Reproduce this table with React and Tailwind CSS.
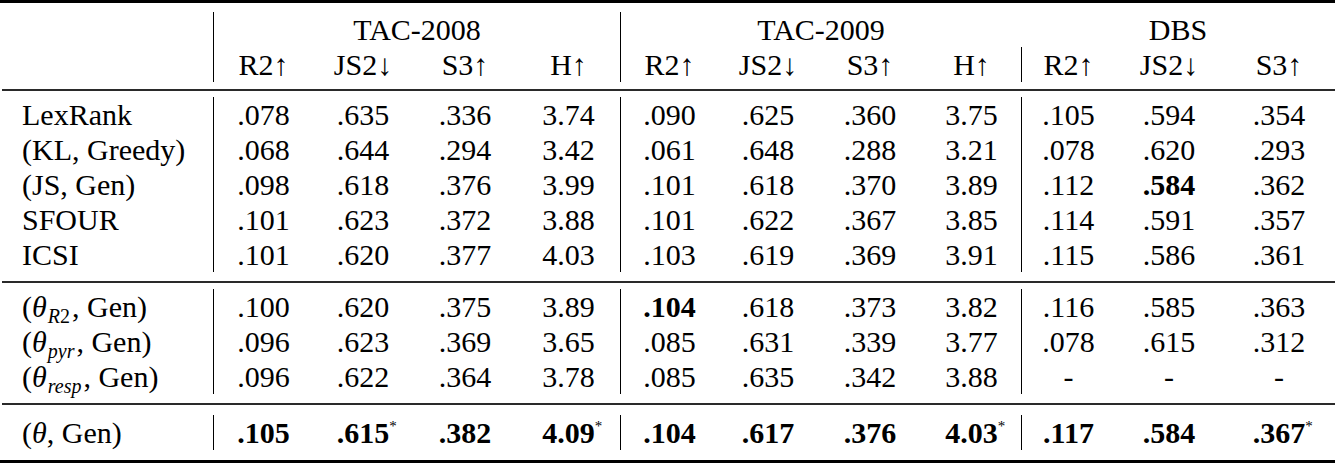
const cols = 'grid grid-cols-[213px_100px_100px_104px_103px_98px_100px_104px_99px_94px_108px_112px]';

// columns that open a group get the vertical rule
const splitCols = [1, 5, 9];

const Theta = ({ sub }) => (
  <span>
    (<i>θ</i>
    {sub && <span className="text-[20px] leading-[0] [vertical-align:-6px] pl-[1px] pr-[2px]">{sub}</span>}, Gen)
  </span>
);

const block1 = [
  { label: 'LexRank', vals: ['.078', '.635', '.336', '3.74', '.090', '.625', '.360', '3.75', '.105', '.594', '.354'] },
  { label: '(KL, Greedy)', vals: ['.068', '.644', '.294', '3.42', '.061', '.648', '.288', '3.21', '.078', '.620', '.293'] },
  { label: '(JS, Gen)', vals: ['.098', '.618', '.376', '3.99', '.101', '.618', '.370', '3.89', '.112', '.584', '.362'], bold: [9] },
  { label: 'SFOUR', vals: ['.101', '.623', '.372', '3.88', '.101', '.622', '.367', '3.85', '.114', '.591', '.357'] },
  { label: 'ICSI', vals: ['.101', '.620', '.377', '4.03', '.103', '.619', '.369', '3.91', '.115', '.586', '.361'] },
];

const block2 = [
  {
    label: <Theta sub={<><i>R</i>2</>} />,
    vals: ['.100', '.620', '.375', '3.89', '.104', '.618', '.373', '3.82', '.116', '.585', '.363'],
    bold: [4],
  },
  {
    label: <Theta sub={<i>pyr</i>} />,
    vals: ['.096', '.623', '.369', '3.65', '.085', '.631', '.339', '3.77', '.078', '.615', '.312'],
  },
  {
    label: <Theta sub={<i>resp</i>} />,
    vals: ['.096', '.622', '.364', '3.78', '.085', '.635', '.342', '3.88', '-', '-', '-'],
  },
];

const block3 = [
  {
    label: <Theta />,
    vals: ['.105', '.615*', '.382', '4.09*', '.104', '.617', '.376', '4.03*', '.117', '.584', '.367*'],
    bold: [0, 1, 2, 3, 4, 5, 6, 7, 8, 9, 10],
  },
];

function Value({ text, bold }) {
  const star = text.endsWith('*');
  const num = star ? text.slice(0, -1) : text;
  return (
    <span className={`relative ${bold ? 'font-bold' : ''}`}>
      {num}
      {star && <span className="absolute left-full top-[-6px] text-[15px] font-normal">*</span>}
    </span>
  );
}

function Block({ rows, className }) {
  return (
    <div className={`${cols} ${className}`}>
      {rows.map((row, r) => (
        <div key={r} className="contents">
          <div className="pl-[22px] whitespace-nowrap h-[35px]">{row.label}</div>
          {row.vals.map((v, i) => (
            <div
              key={i}
              className={`flex justify-center h-[35px] ${splitCols.includes(i + 1) ? 'border-l border-black' : ''}`}
            >
              <Value text={v} bold={row.bold && row.bold.includes(i)} />
            </div>
          ))}
        </div>
      ))}
    </div>
  );
}

const metrics = ['R2↑', 'JS2↓', 'S3↑', 'H↑', 'R2↑', 'JS2↓', 'S3↑', 'H↑', 'R2↑', 'JS2↓', 'S3↑'];

export default function App() {
  return (
    <div className="w-[1335px] bg-white text-black font-['Liberation_Serif',serif] text-[30px] leading-[35px]">
      <div className="h-[3px] bg-black" />

      {/* header */}
      <div className={`${cols} pt-[9px] pb-[7px]`}>
        <div />
        <div className="col-span-4 border-l border-black text-center">TAC-2008</div>
        <div className="col-span-4 border-l border-black text-center">TAC-2009</div>
        <div className="col-span-3 text-center">DBS</div>

        <div />
        {metrics.map((m, i) => (
          <div
            key={i}
            className={`text-center ${splitCols.includes(i + 1) ? 'border-l border-black' : ''}`}
          >
            {m}
          </div>
        ))}
      </div>

      <div className="h-[2px] ml-[2px] bg-[#2a2a2a]" />
      <Block rows={block1} className="pt-[6px] pb-[9px]" />
      <div className="h-[2px] ml-[2px] bg-[#2a2a2a]" />
      <Block rows={block2} className="pt-[6px] pb-[9px]" />
      <div className="h-[2px] ml-[2px] bg-[#2a2a2a]" />
      <Block rows={block3} className="pt-[10px] pb-[10px]" />
      <div className="h-[3px] bg-black" />
    </div>
  );
}
